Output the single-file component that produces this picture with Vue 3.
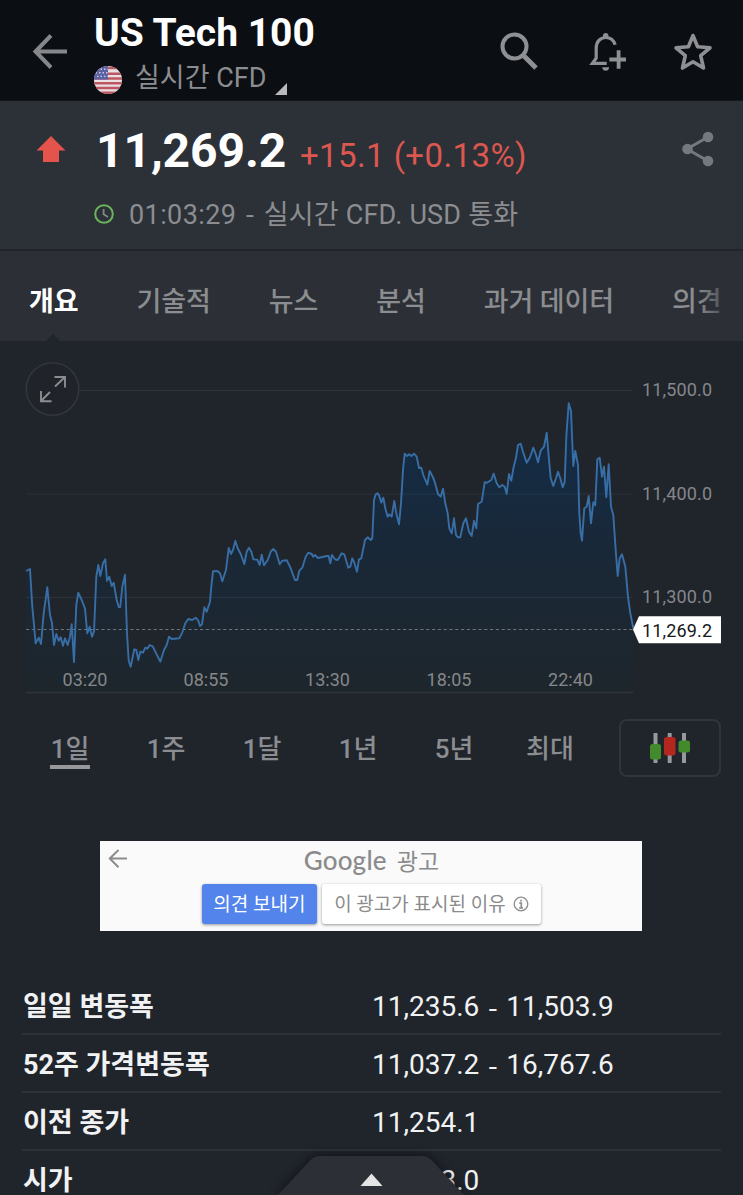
<script setup>
/**
 * Instrument overview — quote header, intraday chart and key figures.
 */
import { computed, ref } from 'vue'

const tabs = ['개요', '기술적', '뉴스', '분석', '과거 데이터', '의견']
const activeTab = ref('개요')

const ranges = ['1일', '1주', '1달', '1년', '5년', '최대']
const activeRange = ref('1일')

const stats = [
  { label: '일일 변동폭', value: '11,235.6', to: '11,503.9' },
  { label: '52주 가격변동폭', value: '11,037.2', to: '16,767.6' },
  { label: '이전 종가', value: '11,254.1' },
  { label: '시가', value: '11,263.0' },
]

const yTicks = [
  { y: 40, label: '11,500.0' },
  { y: 143.5, label: '11,400.0' },
  { y: 247, label: '11,300.0' },
]

const xTicks = [
  { x: 85, label: '03:20' },
  { x: 206, label: '08:55' },
  { x: 327.5, label: '13:30' },
  { x: 449, label: '18:05' },
  { x: 570.5, label: '22:40' },
]

// Sampled prices per session, in thirds of a pixel from the session start
const sessions = [
  {
    start: 0,
    points: '78,663 90,657 97,770 107,880 116,863 123,882 131,790 142,712 150,795 156,820 162,885 169,852 176,872 182,862 189,887 195,865 203,885 210,860 215,823 222,936 229,765 235,728 245,750 255,775 262,850 269,830 276,860 282,845 289,680 295,645 301,678 309,640 316,628 321,692 328,680 335,708 341,698 350,750 356,771 361,771 367,710 375,674 381,850 386,932 392,950 403,898 409,900 415,930 421,905 429,908 436,893 442,896 449,885 458,889 466,905 481,935 492,900 500,885 507,860 515,867 538,865 547,847 556,820 565,807 577,810 587,803 595,812',
  },
  {
    start: 600,
    points: '0,828 6,823 13,772 20,785 30,755 34,710 39,664 52,663 60,670 67,694 78,660 86,594 93,612 99,600 106,573 113,595 122,612 133,642 140,605 147,593 154,605 160,628 172,629 179,645 185,614 192,646 203,630 212,605 220,597 228,605 239,643 247,632 260,631 270,650 285,690 292,690 298,662 307,653 317,620 325,608 335,612 339,620 345,615 354,624 380,618 386,618 391,640 396,615 405,628 413,630 425,610 433,613 445,653 451,650 457,625 463,638 471,665 477,628 484,625 495,570 503,562 512,570 517,565 522,450 527,433 533,430 538,438 544,458 550,443 557,480 563,500 568,493 575,500 583,453 589,490 597,523 603,460 609,360 614,311 621,318 628,313 634,318 642,311',
  },
  {
    start: 1200,
    points: '50,320 57,354 64,353 70,375 82,404 89,363 98,380 105,398 114,432 122,440 129,416 136,460 143,490 148,535 155,550 162,505 168,555 173,562 181,562 190,520 198,505 207,545 215,558 222,512 229,535 234,462 245,455 254,397 261,398 274,390 281,371 290,400 298,412 307,405 314,410 320,432 327,372 334,392 341,350 348,323 354,285 362,281 369,305 380,338 390,322 400,293 407,312 414,337 422,302 432,290 440,248 446,320 452,385 460,408 468,385 474,365 481,385 488,412 494,395 499,260',
  },
  {
    start: 1650,
    points: '56,160 63,183 70,348 76,303 84,345 88,490 92,550 96,572 103,475 110,470 116,438 123,520 130,457 136,466 142,328 149,323 156,380 162,350 169,442 176,343 183,470 190,495 197,600 203,678 209,625 216,613 226,650 234,740 241,790 250,835',
  },
]

const linePath = computed(() =>
  'M' + sessions
    .flatMap(s => s.points.split(' ').map(p => {
      const [x, y] = p.split(',').map(Number)
      return `${((s.start + x) / 3).toFixed(1)} ${(y / 3).toFixed(1)}`
    }))
    .join('L'),
)
const areaPath = computed(() => `${linePath.value}V342H26Z`)
</script>

<template>
  <div class="screen">
    <header class="topbar">
      <svg class="back" width="36" height="36" viewBox="0 0 36 36">
        <path d="M35 18.5H4M19 2.5 3.5 18.5 19 34.5" fill="none" stroke="#85878b" stroke-width="4" />
      </svg>
      <div class="heading">
        <h1>US Tech 100</h1>
        <div class="subtitle">
          <svg class="flag" width="28" height="28" viewBox="0 0 28 28">
            <defs><clipPath id="flag-clip"><circle cx="14" cy="14" r="14" /></clipPath></defs>
            <g clip-path="url(#flag-clip)">
              <rect width="28" height="28" fill="#e8e1e3" />
              <path d="M0 2H28M0 7.7H28M0 12.5H28M0 17.2H28M0 22H28M0 26.8H28" stroke="#bd5660" stroke-width="2.4" />
              <rect width="14" height="13.5" fill="#5b62a4" />
              <path d="M3 3.2H14M1.5 6.8H14M3 10.4H14" stroke="#c9cbe4" stroke-width="1.4" stroke-dasharray="1.5 2" />
            </g>
          </svg>
          <span>실시간 CFD</span>
          <svg class="corner" width="12" height="12" viewBox="0 0 12 12"><path d="M12 0V12H0Z" fill="#b9babc" /></svg>
        </div>
      </div>
      <div class="actions">
        <svg width="40" height="40" viewBox="0 0 40 40" fill="none" stroke="#8e9093">
          <circle cx="15.5" cy="15.5" r="12" stroke-width="4" />
          <path d="M25 25 37 37" stroke-width="5" />
        </svg>
        <svg width="40" height="40" viewBox="0 0 40 40" fill="none" stroke="#8e9093">
          <g transform="translate(2.2 .2)">
            <path d="M27 13.5C25.5 9 22 6.3 17.5 6.3 11.5 6.3 8 11 8 17V27L4.2 32.2H18.5" stroke-width="3.2" />
            <path d="M14.8 6V4.4A2.7 2.7 0 0 1 20.2 4.4V6ZM14 36H21Q20.5 39.5 17.5 39.5T14 36Z" fill="#8e9093" stroke="none" />
            <path d="M30.4 19V37.5M21.2 28.3H39.8" stroke-width="3.8" />
          </g>
        </svg>
        <svg width="40" height="40" viewBox="0 0 40 40" fill="none" stroke="#8e9093" stroke-width="3.6" stroke-linejoin="round">
          <path d="M20 4.5 24.6 15.7 37 16.8 27.7 24.7 30.5 37 20 30.7 9.5 37 12.3 24.7 3 16.8 15.4 15.7Z" />
        </svg>
      </div>
    </header>

    <section class="quote">
      <svg class="up" width="30" height="28" viewBox="0 0 30 28"><path d="M15 1 29.5 15.5H23V27H7V15.5H.5Z" fill="#e5544c" /></svg>
      <div class="quote-body">
        <div class="price-row">
          <span class="price">11,269.2</span>
          <span class="change">+15.1 (+0.13%)</span>
        </div>
        <div class="time-row">
          <svg width="20" height="20" viewBox="0 0 20 20" fill="none">
            <circle cx="10" cy="10" r="8.8" stroke="#6cb35c" stroke-width="2" />
            <path d="M9.6 5V10.3L14 13" stroke="#7f8a86" stroke-width="1.8" />
          </svg>
          <span><time>01:03:29</time> <i class="dash">-</i> 실시간 CFD. USD 통화</span>
        </div>
      </div>
      <svg class="share" width="32" height="36" viewBox="0 0 32 36" fill="#75787c">
        <path d="M26 6 5 18 26 30" fill="none" stroke="#75787c" stroke-width="3" />
        <circle cx="26" cy="6" r="5.3" /><circle cx="5.5" cy="18" r="5.3" /><circle cx="26" cy="30" r="5.3" />
      </svg>
    </section>

    <nav class="tabs">
      <button
        v-for="tab in tabs"
        :key="tab"
        :class="{ active: tab === activeTab }"
        @click="activeTab = tab"
      >{{ tab }}</button>
    </nav>

    <svg class="chart" width="743" height="350" viewBox="0 0 743 350">
      <defs>
        <linearGradient id="area-fill" x1="0" y1="53" x2="0" y2="342" gradientUnits="userSpaceOnUse">
          <stop offset="0" stop-color="#122d4a" />
          <stop offset=".5" stop-color="#192838" />
          <stop offset="1" stop-color="#1e262c" />
        </linearGradient>
      </defs>
      <path :d="areaPath" fill="url(#area-fill)" />
      <path
        v-for="t in yTicks"
        :key="t.label"
        :d="`M26 ${t.y + 0.5}H633`"
        stroke="#8fa0b0"
        stroke-opacity=".12"
      />
      <path d="M26 342.5H633" stroke="#30353c" stroke-width="1.4" />
      <path d="M26 279.5H633" stroke="#6d7479" stroke-dasharray="3.2 2.6" stroke-width="1.2" />
      <path :d="linePath" fill="none" stroke="#386ea6" stroke-width="1.9" stroke-linejoin="round" />
      <g class="axis">
        <text v-for="t in yTicks" :key="t.label" x="642" :y="t.y + 6.3" textLength="70">{{ t.label }}</text>
        <text v-for="t in xTicks" :key="t.label" :x="t.x" y="336.3" text-anchor="middle">{{ t.label }}</text>
      </g>
      <path d="M633 279.5 639 266.3H721V293.3H639Z" fill="#fff" />
      <text class="last" x="642" y="287.3" textLength="70">11,269.2</text>
      <circle cx="52.5" cy="39" r="26.3" fill="#20242a" stroke="#31363b" stroke-width="1.6" />
      <path d="M54.5 27H65V37.5M65 27 55 36.5M41 41V51.3H51.5M41 51 50 42" fill="none" stroke="#8b8d90" stroke-width="1.9" />
    </svg>

    <div class="ranges">
      <button
        v-for="r in ranges"
        :key="r"
        :class="{ active: r === activeRange }"
        @click="activeRange = r"
      ><span>{{ r }}</span></button>
      <button class="candles">
        <svg width="42" height="30" viewBox="0 0 42 30">
          <path d="M6.5 1V29M20.7 1V29M35 1V29" stroke="#96989b" stroke-width="4" stroke-linecap="round" />
          <rect x="1" y="11" width="11" height="15.5" rx="2.5" fill="#438a2d" />
          <rect x="15" y="4" width="11.5" height="18.5" rx="2.5" fill="#b3271f" />
          <rect x="29.5" y="7.5" width="11.5" height="12" rx="2.5" fill="#438a2d" />
        </svg>
      </button>
    </div>

    <aside class="ad">
      <svg class="ad-back" width="20" height="20" viewBox="0 0 20 20">
        <path d="M19 9.5H2M10.5 1 1.8 9.5 10.5 18.2" fill="none" stroke="#8c8c8c" stroke-width="2" />
      </svg>
      <p class="ad-title"><b>Google</b><span>광고</span></p>
      <div class="ad-buttons">
        <button class="primary">의견 보내기</button>
        <button class="why">
          이 광고가 표시된 이유
          <svg width="16" height="16" viewBox="0 0 16 16" fill="none" stroke="#8f8f8f">
            <circle cx="8" cy="8" r="6.8" stroke-width="1.3" />
            <path d="M8 3.8V5.6M6.3 7.2H8.3V11.8M6.2 11.8H10" stroke-width="1.7" />
          </svg>
        </button>
      </div>
    </aside>

    <dl class="stats">
      <div v-for="s in stats" :key="s.label" class="stat">
        <dt>{{ s.label }}</dt>
        <dd>
          <span>{{ s.value }}</span>
          <template v-if="s.to"><i class="dash">-</i><span>{{ s.to }}</span></template>
        </dd>
      </div>
    </dl>

    <svg class="drawer" width="212" height="52" viewBox="0 0 212 52">
      <path d="M12 53 45 17.5Q49 13 55 13H157Q163 13 167 17.5L200 53Z" fill="#2c3036" />
      <path d="M106.5 30.5 117.5 43H95.5Z" fill="#e4e4e4" />
    </svg>
  </div>
</template>

<style>
body { margin: 0; background: #20242b; }
</style>

<style scoped>
.screen {
  position: relative;
  width: 743px;
  height: 1195px;
  overflow: hidden;
  background: #20242b;
  font-family: Roboto, "Noto Sans CJK KR", sans-serif;
  color: #8b8d90;
}
svg { display: block; flex: none; }
button { padding: 0; border: 0; background: none; color: inherit; font: inherit; white-space: nowrap; }
.dash { font-family: "Noto Sans CJK KR", sans-serif; font-style: normal; }

.topbar {
  display: flex;
  box-sizing: border-box;
  height: 101px;
  padding: 10px 30px 0 32px;
  background: #0b0e13;
  border-bottom: 1px solid #14171b;
}
.back { margin: 23px 26px 0 0; }
.heading { flex: 1; }
h1 { margin: 0; font-size: 39px; line-height: 47px; font-weight: 700; color: #fff; white-space: nowrap; }
.subtitle { display: flex; align-items: center; height: 44px; font-size: 27px; line-height: 44px; }
.subtitle span { margin: -3px 9px 0 13px; }
.flag { margin-top: 2px; }
.corner { margin-top: 20px; }
.actions { display: flex; gap: 47px; padding-top: 21px; }

.quote {
  display: flex;
  box-sizing: border-box;
  height: 150px;
  padding: 20px 29px 0 36px;
  background: #2c3037;
  border-bottom: 2px solid #21252b;
}
.up { margin: 14px 30px 0 0; }
.quote-body { flex: 1; white-space: nowrap; }
.price-row { display: flex; height: 60px; }
.price { width: 204px; font-size: 48px; line-height: 60px; font-weight: 700; color: #fff; letter-spacing: -0.1px; }
.change { font-size: 33px; line-height: 70px; letter-spacing: 0.4px; color: #db574f; }
.time-row { display: flex; align-items: center; gap: 15px; height: 66px; margin-left: -2px; font-size: 27px; letter-spacing: 0.2px; }
.time-row span { margin-top: 2px; line-height: 64px; }
.time-row .dash { margin: 0 2px; line-height: 1; }
time { letter-spacing: 0.4px; }
.share { margin-top: 10px; }

.tabs {
  position: relative;
  display: flex;
  gap: 58px;
  height: 90px;
  padding-left: 29px;
  background: #2c3036;
}
/* Fades the last tab towards the screen edge */
.tabs::after {
  content: '';
  position: absolute;
  right: 22px;
  top: 0;
  width: 24px;
  height: 90px;
  background: linear-gradient(90deg, rgba(44, 48, 54, 0), rgba(44, 48, 54, 0.6));
}
.tabs button { position: relative; font-size: 27px; line-height: 102px; height: 90px; font-weight: 500; letter-spacing: -0.1px; }
.tabs .active { color: #fff; font-weight: 700; }
.tabs .active::after {
  content: '';
  position: absolute;
  left: 17px;
  bottom: 0;
  border: 7px solid transparent;
  border-top: 0;
  border-bottom-color: #20242b;
}

.chart { margin-top: 9px; }
.axis { font-size: 18px; fill: #85878a; }
.last { font-size: 18px; fill: #16181b; }

.ranges { display: flex; box-sizing: border-box; height: 77px; padding: 19px 22px 0; }
.ranges button { width: 96px; height: 58px; font-size: 26px; line-height: 60px; font-weight: 500; }
.ranges .active span { position: relative; }
.ranges .active span::after {
  content: '';
  position: absolute;
  left: -1px;
  right: -1px;
  bottom: -5px;
  height: 4px;
  background: #96989b;
}
.ranges .candles {
  display: flex;
  box-sizing: border-box;
  align-items: center;
  justify-content: center;
  width: 102px;
  margin-left: 21px;
  border: 2px solid #30353b;
  border-radius: 8px;
}

.ad {
  position: relative;
  width: 542px;
  height: 90px;
  margin: 64px 0 0 100.4px;
  background: #fafafb;
  color: #8b8b8b;
}
.ad-back { position: absolute; left: 8px; top: 8px; }
.ad-title { margin: 0; height: 43px; text-align: center; font-size: 23px; line-height: 38px; }
.ad-title b { margin-right: 10px; font-family: Lato, sans-serif; font-size: 26px; font-weight: 500; letter-spacing: 0.2px; }
.ad-buttons { display: flex; justify-content: center; gap: 5px; font-size: 19px; line-height: 41px; }
.ad-buttons button { height: 40px; border-radius: 3px; box-shadow: 0 1px 3px rgba(0, 0, 0, 0.4); }
.primary { width: 115px; background: #5284ec !important; color: #fff !important; }
.why { display: flex; align-items: center; justify-content: center; gap: 7px; width: 219px; background: #fff !important; }

.stats { margin: 46px 22px 0; }
.stat {
  display: flex;
  box-sizing: border-box;
  height: 58px;
  border-bottom: 2px solid #2e3238;
  font-size: 27px;
  line-height: 59px;
  color: #f1f2f3;
}
dt { width: 349px; padding-left: 1px; line-height: 61px; font-weight: 700; }
dd { display: flex; margin: 0; font-size: 28px; }
dd .dash { width: 27px; text-align: center; }

/* Drawer handle over the last row */
.drawer { position: absolute; left: 265px; bottom: 0; filter: drop-shadow(0 -1px 5px rgba(0, 0, 0, 0.5)); }
</style>
